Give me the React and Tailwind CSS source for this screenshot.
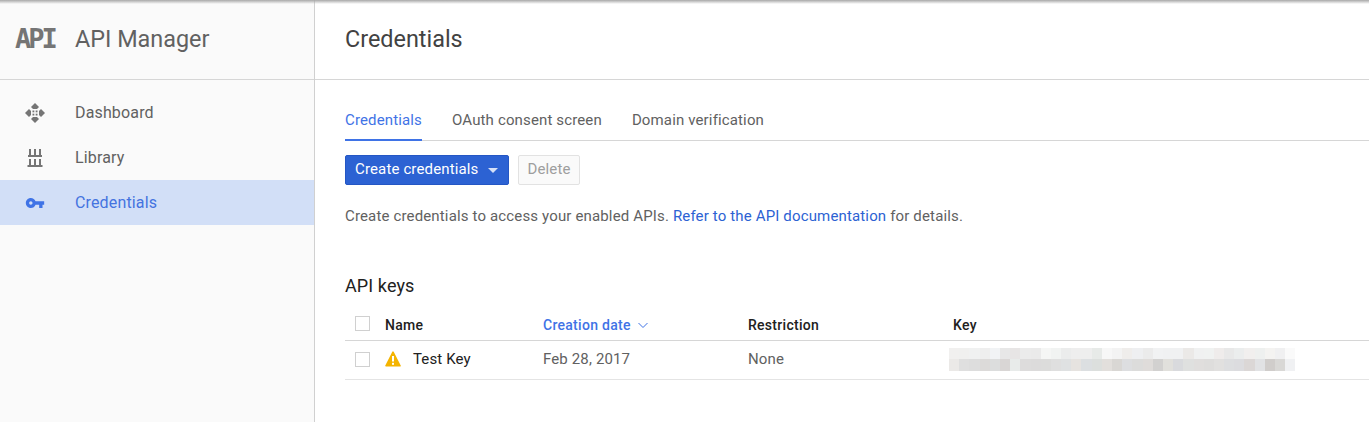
import React from "react";

const topCells = ["#f1f0ef", "#f0f0ef", "#f0f1f1", "#eeeeee", "#f1f3f5", "#e7e7e7", "#e7e5e5", "#ebebeb", "#eaeaea", "#f5f6f5", "#f1f3f2", "#ebecec", "#eeeeee", "#eeeeee", "#e7eae8", "#f7f7f7", "#f3f3f3", "#efedeb", "#eeeff1", "#ebebeb", "#f1f2f3", "#f0f1f2", "#f0f1f2", "#ebe9e7", "#f0f1f1", "#f0f2f1", "#efeceb", "#e8e8e8", "#ebeded", "#f1efee", "#eef0ef", "#f4f3f1", "#f0f0f1", "#fafafa"];
const bottomCells = ["#ebe9e7", "#dfdfdf", "#dddddd", "#dcdad9", "#dcdddd", "#d9d6d5", "#e8ebea", "#dddcdc", "#dcdbdb", "#dcdcdb", "#dfdfdf", "#dfe1e2", "#e6e3e0", "#dcdfe1", "#dcdfdd", "#e2dfdc", "#d9d7d4", "#dddee0", "#dcdcdb", "#dfdcda", "#d2d1d0", "#e1e0dc", "#d9dadd", "#dfe0df", "#e0dedd", "#dedddc", "#e1e0df", "#dddee0", "#dcdcdf", "#dbd7d6", "#e1e2e4", "#d0cdcb", "#d9d8d6", "#f0f1f3"];

const DashboardIcon = () => (
  <svg width="20" height="20" viewBox="0 0 20 20" fill="currentColor">
    <path d="M10 0l4 4-2 2H8L6 4z" />
    <path d="M10 20l4-4-2-2H8l-2 2z" />
    <path d="M0 10l4-4 2 2v4l-2 2z" />
    <path d="M20 10l-4-4-2 2v4l2 2z" />
    <rect x="7.5" y="7.5" width="1.8" height="1.8" />
    <rect x="10.7" y="7.5" width="1.8" height="1.8" />
    <rect x="7.5" y="10.7" width="1.8" height="1.8" />
    <rect x="10.7" y="10.7" width="1.8" height="1.8" />
  </svg>
);

const LibraryIcon = () => (
  <svg width="16" height="18" viewBox="0 0 16 18" fill="currentColor">
    <rect x="2" y="0" width="2" height="6" />
    <rect x="7" y="0" width="2" height="6" />
    <rect x="12" y="0" width="2" height="6" />
    <rect x="1" y="6" width="14" height="2" />
    <rect x="2" y="10" width="2" height="6" />
    <rect x="7" y="10" width="2" height="6" />
    <rect x="12" y="10" width="2" height="6" />
    <rect x="0.5" y="16" width="15" height="2" />
  </svg>
);

const KeyIcon = () => (
  <svg width="20" height="20" viewBox="0 0 24 24" fill="currentColor">
    <path d="M12.65 10C11.83 7.67 9.61 6 7 6c-3.31 0-6 2.69-6 6s2.69 6 6 6c2.61 0 4.83-1.67 5.65-4H17v4h4v-4h2v-4H12.65zM7 14c-1.1 0-2-.9-2-2s.9-2 2-2 2 .9 2 2-.9 2-2 2z" />
  </svg>
);

const WarningIcon = () => (
  <svg width="16" height="16" viewBox="0 0 16 16">
    <path d="M8 1.2L15 14.8H1z" fill="#f4b400" stroke="#f4b400" strokeWidth="1.6" strokeLinejoin="round" />
    <rect x="7" y="5" width="2" height="5.5" fill="#fff" />
    <rect x="7" y="11.8" width="2" height="2" fill="#fff" />
  </svg>
);

const NavItem = ({ icon, label, active }) => (
  <div className={`flex items-center h-[45px] ${active ? "bg-[#d2dff7] text-[#4473e0]" : "text-[#616161]"}`}>
    <div className={`w-[75px] flex justify-center pr-[5px] ${active ? "text-[#3f73e6]" : "text-[#757575]"}`}>{icon}</div>
    <span className="text-[16px] tracking-[0.15px]">{label}</span>
  </div>
);

const Checkbox = () => <div className="w-[15px] h-[15px] border border-[#d0d0d0] bg-white ml-[10px]" />;

const App = () => {
  return (
    <div className="relative flex w-[1369px] h-[422px] overflow-hidden bg-white font-['Roboto',sans-serif]">
      {/* top shadow */}
      <div className="absolute top-0 left-0 right-0 h-[4px] bg-gradient-to-b from-[#a8a8a8] to-transparent" />

      {/* Sidebar */}
      <div className="w-[315px] shrink-0 bg-[#fafafa] border-r border-[#d0d0d0]">
        <div className="flex items-center h-[80px] border-b border-[#d6d6d6]">
          <span className="w-[75px] pl-[15px] font-['DejaVu_Sans_Mono',monospace] font-bold text-[27px] tracking-[-3px] text-[#757575]">API</span>
          <span className="text-[23.4px] text-[#616161]">API Manager</span>
        </div>
        <div className="pt-[10px]">
          <NavItem icon={<DashboardIcon />} label="Dashboard" />
          <NavItem icon={<LibraryIcon />} label="Library" />
          <NavItem icon={<KeyIcon />} label="Credentials" active />
        </div>
      </div>

      {/* Main Content */}
      <div className="flex-1 min-w-0">
        <div className="flex items-center h-[80px] pl-[30px] border-b border-[#d6d6d6]">
          <h1 className="text-[23.4px] text-[#424242]">Credentials</h1>
        </div>

        <div className="pl-[30px]">
          <div className="flex gap-[30px] h-[61px] pt-[20px] border-b border-[#d6d6d6] text-[15px] tracking-[0.14px] text-[#616161]">
            <div className="h-[41px] flex items-center pt-[1px] border-b-[2px] border-[#3f73e6] text-[#3f73e6]">Credentials</div>
            <div className="h-[41px] flex items-center pb-[1px]">OAuth consent screen</div>
            <div className="h-[41px] flex items-center pb-[1px]">Domain verification</div>
          </div>

          <div className="flex gap-[9px] mt-[14px] text-[15px] tracking-[0.14px]">
            <button className="flex items-center h-[30px] w-[164px] pl-[9px] pb-[1px] rounded-[2px] bg-[#2c62d3] border border-[#2456c4] text-white">
              Create credentials
              <span className="ml-[10px] mt-[1px] w-0 h-0 border-x-[5px] border-x-transparent border-t-[5px] border-t-[#d5e0f7]" />
            </button>
            <button className="h-[30px] w-[62px] pb-[1px] rounded-[2px] bg-[#fafafa] border border-[#e2e2e2] text-[#9e9e9e]">Delete</button>
          </div>

          <p className="mt-[21px] text-[15px] tracking-[0.15px] leading-[20px] text-[#616161]">
            Create credentials to access your enabled APIs. <span className="text-[#2c62d3]">Refer to the API documentation</span> for details.
          </p>

          <h2 className="mt-[48px] text-[18px] tracking-[0.1px] leading-[24px] text-[#212121]">API keys</h2>

          <div className="mt-[12px] grid grid-cols-[40px_158px_205px_205px_1fr] items-center h-[31px] border-b border-[#d6d6d6] text-[14px] tracking-[0.28px] font-medium text-[#212121]">
            <div className="-mt-[3px]"><Checkbox /></div>
            <div>Name</div>
            <div className="flex items-center gap-[6px] text-[#3f73e6]">
              Creation date
              <svg width="12" height="12" viewBox="0 0 12 12" fill="none" stroke="currentColor" strokeWidth="1"><path d="M1.5 4l4.5 4.5L10.5 4" /></svg>
            </div>
            <div>Restriction</div>
            <div>Key</div>
          </div>

          <div className="grid grid-cols-[40px_158px_205px_205px_1fr] items-center h-[39px] pb-[2px] border-b border-[#e4e4e4] text-[15px] tracking-[0.14px]">
            <Checkbox />
            <div className="flex items-center gap-[12px] text-[#212121]">
              <WarningIcon />
              <span>Test Key</span>
            </div>
            <div className="text-[#616161]">Feb 28, 2017</div>
            <div className="text-[#616161]">None</div>
            <div className="-ml-[4px]">
              <div className="flex h-[11px]">
                {topCells.map((c, i) => <div key={i} className="w-[10.2px]" style={{ backgroundColor: c }} />)}
              </div>
              <div className="flex h-[12px]">
                {bottomCells.map((c, i) => <div key={i} className="w-[10.2px]" style={{ backgroundColor: c }} />)}
              </div>
            </div>
          </div>
        </div>
      </div>
    </div>
  );
};

export default App;
